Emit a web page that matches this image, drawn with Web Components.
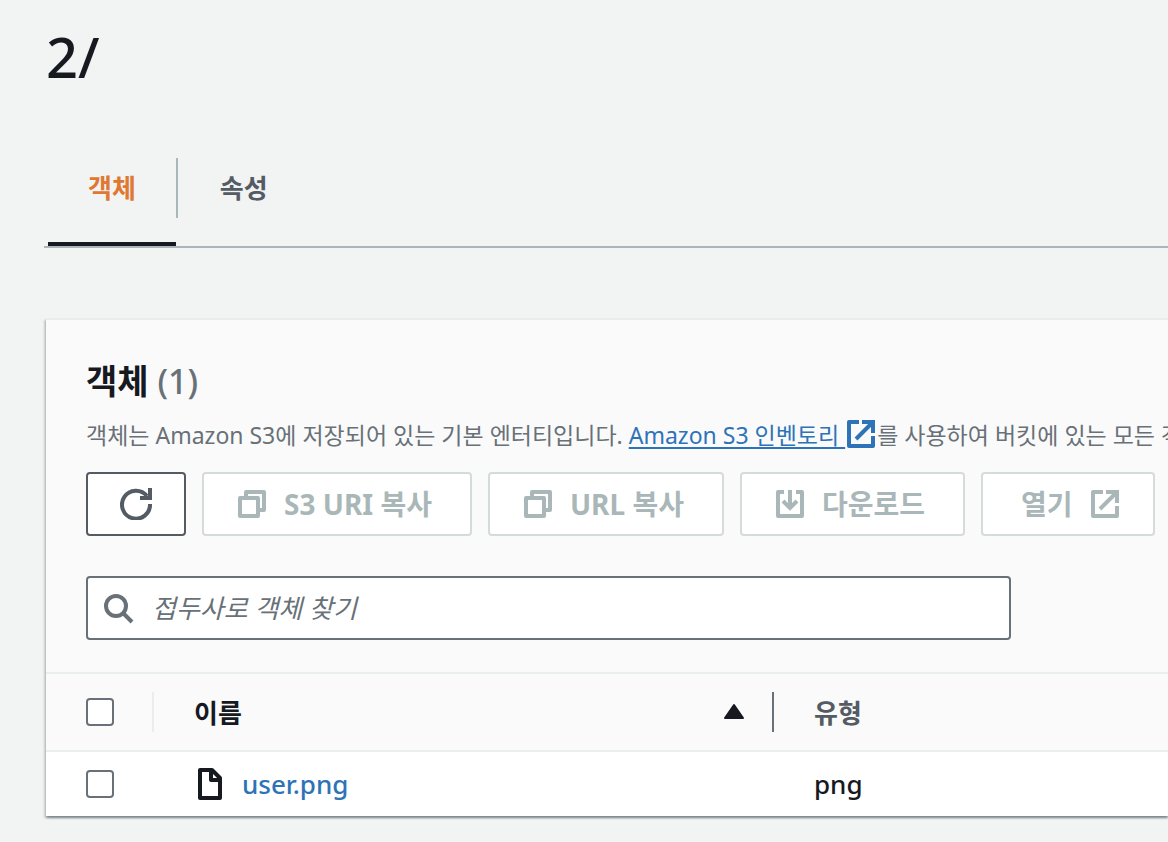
<!DOCTYPE html>
<html lang="ko">
<head>
<meta charset="utf-8">
<meta name="viewport" content="width=device-width, initial-scale=1">
<title>2/</title>
<style>
  body {
    margin: 0;
    background: #f2f3f3;
    color: #16191f;
    font-family: "Noto Sans", "Noto Sans CJK KR", sans-serif;
    font-size: 26px;
    overflow-x: hidden;
  }
</style>
</head>
<body>
<s3-folder-page heading="2/">
  <s3-tabs slot="tabs" labels="객체|속성"></s3-tabs>

  <s3-panel>
    <s3-panel-title slot="header" count="(1)">객체</s3-panel-title>
    <s3-description slot="header">객체는 Amazon S3에 저장되어 있는 기본 엔터티입니다. <s3-external-link href="#inventory">Amazon S3 인벤토리 </s3-external-link>를 사용하여 버킷에 있는 모든 객체</s3-description>
    <s3-toolbar slot="header">
      <s3-button icon="refresh" label="새로 고침"></s3-button>
      <s3-button icon="copy" disabled>S3 URI 복사</s3-button>
      <s3-button icon="copy" disabled>URL 복사</s3-button>
      <s3-button icon="download" disabled>다운로드</s3-button>
      <s3-button icon="external" icon-align="end" disabled>열기</s3-button>
    </s3-toolbar>
    <s3-search slot="header" placeholder="접두사로 객체 찾기"></s3-search>
    <s3-object-table></s3-object-table>
  </s3-panel>
</s3-folder-page>

<script>
(function () {
  const ICONS = {
    refresh: `
      <path d="M30 16A14 14 0 1 1 27 8"/>
      <path d="M30 0V10H20"/>`,
    copy: `
      <rect x="4" y="10" width="18" height="18" stroke-linejoin="round"/>
      <path d="M10 9V4H28V22H23" stroke-linejoin="round"/>`,
    download: `
      <path d="M10 4H4V28H28V4H22" stroke-linejoin="round"/>
      <path d="M16 2V19M9 13L16 20L23 13"/>`,
    external: `
      <path d="M14 4H4V28H28V18" stroke-linejoin="round"/>
      <path d="M17 4H28V15M28 4L11 21"/>`,
    search: `
      <circle cx="14" cy="14" r="10"/>
      <path d="M21 21L30 30"/>`,
    file: `
      <path d="M6 2H18L26 10V30H6Z" stroke-linejoin="round"/>
      <path d="M17 2V12H26" stroke-linejoin="round"/>`,
    sort: `
      <path d="M16 9L25 22H7Z" fill="currentColor" stroke-width="2" stroke-linejoin="round"/>`,
  };

  class S3Element extends HTMLElement {
    constructor() {
      super();
      this.attachShadow({ mode: "open" });
    }

    connectedCallback() {
      const style = `
        <style>
          * { box-sizing: border-box; }
          ${this.styles()}
        </style>
      `;

      // trimmed, so that inline elements get no stray space around them
      this.shadowRoot.innerHTML = style.trim() + this.markup().trim();
    }
  }

  class Icon extends S3Element {
    styles() {
      return `
        :host {
          display: inline-block;
          width: 32px;
          height: 32px;
          flex-shrink: 0;
        }
        svg {
          display: block;
          width: 100%;
          height: 100%;
          fill: none;
          stroke: currentColor;
          stroke-width: 4;
        }
      `;
    }

    markup() {
      return `<svg viewBox="0 0 32 32" aria-hidden="true">${ICONS[this.getAttribute("name")]}</svg>`;
    }
  }

  class FolderPage extends S3Element {
    styles() {
      return `
        :host {
          display: block;
          padding: 20px 0 24px 44px;
        }
        h1 {
          margin: 0 0 66px 2px;
          font-size: 56px;
          line-height: 72px;
          font-weight: 500;
        }
        .content {
          margin: 70px 0 0 2px;
        }
      `;
    }

    markup() {
      return `
        <main>
          <h1>${this.getAttribute("heading")}</h1>
          <slot name="tabs"></slot>
          <div class="content"><slot></slot></div>
        </main>
      `;
    }
  }

  class Tabs extends S3Element {
    connectedCallback() {
      super.connectedCallback();
      const tabs = this.shadowRoot.querySelectorAll("button");
      tabs.forEach((tab) => {
        tab.addEventListener("click", () => {
          tabs.forEach((other) => other.setAttribute("aria-selected", other === tab));
        });
      });
    }

    styles() {
      return `
        :host {
          display: block;
          border-bottom: 2px solid #aab7b8;
        }
        .list {
          display: flex;
          padding-left: 4px;
        }
        button {
          border: 0;
          border-bottom: 4px solid transparent;
          padding: 0 0 24px;
          background: none;
          color: #545b64;
          font: inherit;
          font-weight: 700;
          cursor: pointer;
        }
        button[aria-selected="true"] {
          border-bottom-color: #16191f;
          color: #df7832;
        }
        span {
          display: block;
          padding: 0 40px;
          line-height: 60px;
        }
        button + button span {
          padding: 0 42px;
          border-left: 2px solid #aab7b8;
        }
      `;
    }

    markup() {
      const tabs = this.getAttribute("labels").split("|").map((label, index) => `
        <button type="button" role="tab" aria-selected="${index === 0}"><span>${label}</span></button>
      `);
      return `<div class="list" role="tablist">${tabs.join("")}</div>`;
    }
  }

  class Panel extends S3Element {
    styles() {
      return `
        :host {
          display: block;
          border-top: 2px solid #eaeded;
          background: #ffffff;
          box-shadow:
            0 2px 2px rgba(0, 28, 36, 0.3),
            2px 2px 2px rgba(0, 28, 36, 0.15),
            -2px 2px 2px rgba(0, 28, 36, 0.15);
        }
        .header {
          padding: 40px 0 32px 40px;
          background: #fafafa;
          overflow: hidden;
        }
      `;
    }

    markup() {
      return `
        <section>
          <div class="header"><slot name="header"></slot></div>
          <slot></slot>
        </section>
      `;
    }
  }

  class PanelTitle extends S3Element {
    styles() {
      return `
        :host {
          display: block;
          margin-bottom: 14px;
        }
        h2 {
          margin: 0;
          font-size: 34px;
          line-height: 42px;
          font-weight: 700;
        }
        .count {
          color: #687078;
          font-weight: 500;
        }
      `;
    }

    markup() {
      return `<h2><slot></slot> <span class="count">${this.getAttribute("count")}</span></h2>`;
    }
  }

  class Description extends S3Element {
    styles() {
      return `
        :host {
          display: block;
          margin-bottom: 18px;
          color: #687078;
          font-size: 23px;
          line-height: 38px;
          white-space: nowrap;
        }
        p { margin: 0; }
      `;
    }

    markup() {
      return `<p><slot></slot></p>`;
    }
  }

  class ExternalLink extends S3Element {
    styles() {
      return `
        :host { display: inline; }
        a {
          color: #2e73b8;
          text-decoration: none;
        }
        span {
          text-decoration: underline;
          text-decoration-thickness: 2px;
          text-underline-offset: 3px;
          text-decoration-skip-ink: none;
          white-space: pre;
        }
        s3-icon { vertical-align: -6px; }
      `;
    }

    markup() {
      return `<a href="${this.getAttribute("href")}"><span><slot></slot></span><s3-icon name="external"></s3-icon></a>`;
    }
  }

  class Toolbar extends S3Element {
    styles() {
      return `
        :host {
          display: flex;
          gap: 16px;
          margin-bottom: 40px;
        }
      `;
    }

    markup() {
      return `<slot></slot>`;
    }
  }

  class Button extends S3Element {
    styles() {
      return `
        :host {
          display: block;
          flex-shrink: 0;
        }
        button {
          display: flex;
          align-items: center;
          gap: 16px;
          height: 64px;
          padding: 0 32px;
          border: 2px solid #545b64;
          border-radius: 4px;
          background: #ffffff;
          color: #545b64;
          font: inherit;
          font-size: 28px;
          font-weight: 700;
          white-space: nowrap;
          cursor: pointer;
        }
        button:disabled {
          border-color: #d5dbdb;
          color: #aab7b8;
          cursor: default;
        }
        span { padding-bottom: 2px; }
        .start { padding-right: 38px; }
        .end {
          flex-direction: row-reverse;
          padding-left: 38px;
        }
      `;
    }

    markup() {
      const label = this.getAttribute("label");
      const align = this.getAttribute("icon-align") || "start";
      return `
        <button type="button"
          class="${label ? "" : align}"
          ${label ? `aria-label="${label}"` : ""}
          ${this.hasAttribute("disabled") ? "disabled" : ""}>
          <s3-icon name="${this.getAttribute("icon")}"></s3-icon>
          ${label ? "" : "<span><slot></slot></span>"}
        </button>
      `;
    }
  }

  class Search extends S3Element {
    styles() {
      return `
        :host {
          display: block;
          max-width: 925px;
        }
        label {
          display: flex;
          align-items: center;
          gap: 18px;
          height: 64px;
          padding: 0 16px 0 14px;
          border: 2px solid #687078;
          border-radius: 4px;
          background: #ffffff;
          color: #687078;
        }
        input {
          flex: 1;
          min-width: 0;
          height: 100%;
          padding: 0;
          border: 0;
          outline: 0;
          background: none;
          color: #16191f;
          font: inherit;
        }
        input::placeholder {
          color: #687078;
          font-style: italic;
          opacity: 1;
        }
      `;
    }

    markup() {
      const text = this.getAttribute("placeholder");
      return `
        <label>
          <s3-icon name="search"></s3-icon>
          <input type="text" placeholder="${text}" aria-label="${text}">
        </label>
      `;
    }
  }

  class ObjectTable extends S3Element {
    styles() {
      return `
        :host { display: block; }
        table {
          width: 100%;
          border-collapse: separate;
          border-spacing: 0;
          table-layout: fixed;
        }
        .select { width: 108px; }
        .name { width: 620px; }
        th, td {
          padding: 0;
          text-align: left;
        }
        th {
          height: 80px;
          border-top: 2px solid #eaeded;
          border-bottom: 2px solid #eaeded;
          background: #fafafa;
          color: #545b64;
        }
        td {
          height: 64px;
          font-weight: 500;
        }
        .cell {
          display: flex;
          align-items: center;
          padding-left: 40px;
          height: 40px;
        }
        th .cell { border-right: 2px solid #687078; }
        th:first-child .cell { border-right-color: #eaeded; }
        th:last-child .cell { border-right: 0; }
        th .sorted {
          justify-content: space-between;
          padding-right: 22px;
          color: #16191f;
        }
        input {
          appearance: none;
          width: 28px;
          height: 28px;
          margin: 0;
          border: 2px solid #687078;
          border-radius: 4px;
          background: #ffffff;
        }
        input:checked { background: #2e73b8; }
        td .file { gap: 16px; }
        a {
          color: #2e73b8;
          text-decoration: none;
        }
      `;
    }

    markup() {
      return `
        <table>
          <colgroup><col class="select"><col class="name"><col></colgroup>
          <thead>
            <tr>
              <th><div class="cell"><input type="checkbox" aria-label="모두 선택"></div></th>
              <th aria-sort="ascending"><div class="cell sorted">이름<s3-icon name="sort"></s3-icon></div></th>
              <th><div class="cell">유형</div></th>
            </tr>
          </thead>
          <tbody>
            <tr>
              <td><div class="cell"><input type="checkbox" aria-label="user.png"></div></td>
              <td><div class="cell file"><s3-icon name="file"></s3-icon><a href="#user.png">user.png</a></div></td>
              <td><div class="cell">png</div></td>
            </tr>
          </tbody>
        </table>
      `;
    }
  }

  customElements.define("s3-icon", Icon);
  customElements.define("s3-folder-page", FolderPage);
  customElements.define("s3-tabs", Tabs);
  customElements.define("s3-panel", Panel);
  customElements.define("s3-panel-title", PanelTitle);
  customElements.define("s3-description", Description);
  customElements.define("s3-external-link", ExternalLink);
  customElements.define("s3-toolbar", Toolbar);
  customElements.define("s3-button", Button);
  customElements.define("s3-search", Search);
  customElements.define("s3-object-table", ObjectTable);
})();
</script>
</body>
</html>
